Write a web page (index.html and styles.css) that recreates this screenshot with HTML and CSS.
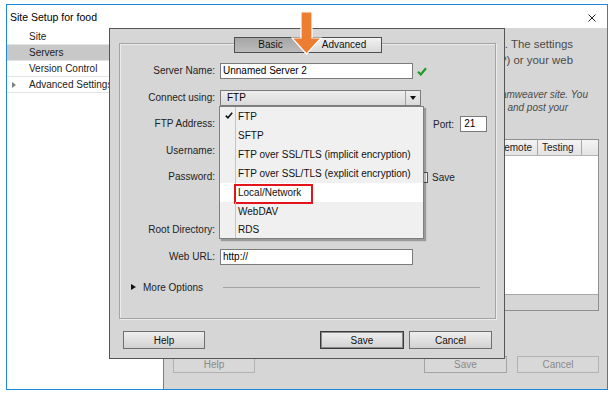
FILE: index.html
```html
<!DOCTYPE html>
<html lang="en">
<head>
<meta charset="utf-8">
<title>Site Setup for food</title>
<link rel="stylesheet" href="styles.css">
</head>
<body>
<div class="window">
  <div class="titlebar">
    <span class="title">Site Setup for food</span>
    <svg class="close" width="8" height="8" viewBox="0 0 8 8"><path d="M0.5 0.5 L7.5 7.5 M7.5 0.5 L0.5 7.5" stroke="#222" stroke-width="1" fill="none"/></svg>
  </div>
  <div class="content">
    <nav class="sidebar">
      <div class="nav-item">Site</div>
      <div class="nav-item selected">Servers</div>
      <div class="nav-item">Version Control</div>
      <div class="nav-item group"><span class="nav-tri"></span>Advanced Settings</div>
    </nav>
    <main class="panel">
      <div class="desc">
        <div class="line r1">Here you'll select the server that will host your pages on the web. The settings</div>
        <div class="line r1">for this dialog box come from your Internet Service Provider (ISP) or your web</div>
        <div class="line">administrator.</div>
      </div>
      <div class="note">
        <div class="line r2">Note: You do not need to complete this step to begin working on your Dreamweaver site. You</div>
        <div class="line r3">only need to define a remote server when you want to connect to the web and post your</div>
        <div class="line">pages.</div>
      </div>
      <div class="server-table">
        <div class="thead">
          <div class="th c-name">Name</div>
          <div class="th c-addr">Address</div>
          <div class="th c-conn">Connection</div>
          <div class="th c-remote">Remote</div>
          <div class="th c-test">Testing</div>
          <div class="th c-fill"></div>
        </div>
        <div class="tbody"></div>
        <div class="ttools"></div>
      </div>
      <div class="bg-buttons">
        <button class="btn-dis w-help">Help</button>
        <span class="spacer"></span>
        <button class="btn-dis w-save">Save</button>
        <button class="btn-dis w-cancel">Cancel</button>
      </div>
    </main>
  </div>

  <div class="dialog">
    <div class="groupbox">
      <div class="tabs-row">
        <div class="tabs">
          <div class="tab active">Basic</div>
          <div class="tab">Advanced</div>
        </div>
      </div>
      <div class="form">
        <label class="lbl">Server Name:</label>
        <div class="ctl">
          <div class="field w-std">Unnamed Server 2</div>
          <svg class="ok" width="10" height="9" viewBox="0 0 10 9"><path d="M1 4.8 L3.8 7.5 L9 1.2" stroke="#1f9b2a" stroke-width="2.2" fill="none"/></svg>
        </div>

        <label class="lbl">Connect using:</label>
        <div class="ctl">
          <div class="select-wrap">
            <div class="select">
              <span class="select-value">FTP</span>
              <span class="select-btn"><span class="down-tri"></span></span>
            </div>
            <div class="menu">
              <div class="menu-item"><span class="chk"><svg width="8" height="7" viewBox="0 0 8 7"><path d="M0.8 3.6 L2.9 5.8 L7.2 0.8" stroke="#111" stroke-width="1.6" fill="none"/></svg></span><span class="mtext">FTP</span></div>
              <div class="menu-item"><span class="chk"></span><span class="mtext">SFTP</span></div>
              <div class="menu-item"><span class="chk"></span><span class="mtext">FTP over SSL/TLS (implicit encryption)</span></div>
              <div class="menu-item"><span class="chk"></span><span class="mtext">FTP over SSL/TLS (explicit encryption)</span></div>
              <div class="menu-item hover"><span class="chk"></span><span class="mtext">Local/Network</span><span class="mark"></span></div>
              <div class="menu-item"><span class="chk"></span><span class="mtext">WebDAV</span></div>
              <div class="menu-item last"><span class="chk"></span><span class="mtext">RDS</span></div>
            </div>
          </div>
        </div>

        <label class="lbl">FTP Address:</label>
        <div class="ctl">
          <div class="field w-wide"></div>
          <span class="port-lbl">Port:</span>
          <div class="field w-port">21</div>
        </div>

        <label class="lbl">Username:</label>
        <div class="ctl"><div class="field w-std"></div></div>

        <label class="lbl">Password:</label>
        <div class="ctl">
          <div class="field w-std"></div>
          <span class="checkbox"></span>
          <span class="save-lbl">Save</span>
        </div>

        <span class="lbl"></span>
        <div class="ctl"><button class="btn w-test">Test</button></div>

        <label class="lbl">Root Directory:</label>
        <div class="ctl"><div class="field w-std"></div></div>

        <label class="lbl">Web URL:</label>
        <div class="ctl"><div class="field w-std">http://</div></div>
      </div>
      <div class="more">
        <span class="more-tri"></span>
        <span class="more-text">More Options</span>
        <span class="more-line"></span>
      </div>
    </div>
    <div class="dlg-buttons">
      <button class="btn w-help2">Help</button>
      <span class="spacer"></span>
      <button class="btn default w-save2">Save</button>
      <button class="btn w-cancel2">Cancel</button>
    </div>
  </div>
</div>

<svg class="arrow" width="32" height="47" viewBox="0 0 32 47">
  <path d="M10 2 H21 V28 H30 L15.5 44 L1 28 H10 Z" fill="#ed7d31" stroke="#ffffff" stroke-width="1.2" stroke-linejoin="miter"/>
</svg>
</body>
</html>
```

FILE: styles.css
```css
* { box-sizing: border-box; }
html, body { margin: 0; padding: 0; }
body {
  width: 616px;
  height: 394px;
  overflow: hidden;
  position: relative;
  background: #ffffff;
  font-family: "Liberation Sans", Arial, sans-serif;
  font-size: 10px;
  color: #1a1a1a;
}
button { font-family: inherit; font-size: 10px; margin: 0; padding: 0; }

.window {
  position: relative;
  margin: 4px 0 0 6px;
  width: 602px;
  height: 386px;
  border: 1px solid #1e88d8;
  background: #ffffff;
  display: flex;
  flex-direction: column;
}
.titlebar {
  height: 23px;
  flex: none;
  display: flex;
  align-items: center;
  justify-content: space-between;
  padding: 0 11px 0 3px;
}
.title { font-size: 10.5px; color: #000; }
.close { display: block; margin-top: 3px; }

.content { flex: 1; display: flex; min-height: 0; }

.sidebar { width: 156px; flex: none; background: #fff; padding-top: 1px; }
.nav-item {
  height: 16px;
  line-height: 15px;
  border-bottom: 1px solid #e3e3e3;
  padding-left: 22px;
  color: #222;
}
.nav-item.selected { background: #c8c8c8; }
.nav-item.group { display: flex; align-items: center; padding-left: 5px; }
.nav-tri {
  width: 0; height: 0;
  border-left: 4px solid #808080;
  border-top: 3px solid transparent;
  border-bottom: 3px solid transparent;
  margin-right: 13px;
}

.panel {
  flex: 1;
  background: #d6d6d6;
  border-left: 1px solid #7d7d7d;
  padding: 8px 8px 0 9px;
  display: flex;
  flex-direction: column;
  min-width: 0;
  overflow: hidden;
}
.desc { font-size: 11.4px; line-height: 16px; color: #4a4a4a; }
.note { font-size: 10px; line-height: 13px; color: #4a4a4a; font-style: italic; margin-top: 4px; }
.line { white-space: nowrap; }
.r1 { text-align: right; padding-right: 26px; }
.r2 { text-align: right; padding-right: 11px; }
.r3 { text-align: right; padding-right: 31px; }

.server-table {
  margin-top: 12px;
  height: 172px;
  border: 1px solid #8f8f8f;
  display: flex;
  flex-direction: column;
}
.thead {
  height: 16px;
  display: flex;
  background: linear-gradient(#f4f4f4, #e3e3e3);
  border-bottom: 1px solid #b4b4b4;
  flex: none;
}
.th {
  border-right: 1px solid #a8a8a8;
  padding-left: 4px;
  line-height: 15px;
  color: #222;
  white-space: nowrap;
}
.c-name { width: 120px; }
.c-addr { width: 110px; }
.c-conn { width: 89px; }
.c-remote { width: 45px; }
.c-test { width: 44px; }
.c-fill { flex: 1; border-right: none; }
.tbody { flex: 1; background: #fff; }
.ttools { height: 16px; flex: none; border-top: 1px solid #a8a8a8; background: #d6d6d6; }

.bg-buttons { display: flex; margin-top: 45px; }
.spacer { flex: 1; }
.btn-dis {
  height: 17px;
  border: 1px solid #b2b2b2;
  background: #d8d8d8;
  color: #8a8a8a;
}
.bg-buttons .w-help { width: 82px; }
.bg-buttons .w-save { width: 83px; border-color: #a4a4a4; }
.bg-buttons .w-cancel { width: 82px; margin-left: 10px; }

/* Modal dialog over the window */
.dialog {
  position: absolute;
  left: 102px;
  top: 23px;
  width: 396px;
  height: 331px;
  background: #d6d6d6;
  border: 1px solid #555;
  display: flex;
  flex-direction: column;
  z-index: 2;
}
.groupbox {
  margin: 14px 0 0 9px;
  width: 377px;
  height: 276px;
  border: 1px solid #a4a4a4;
  box-shadow: inset 1px 1px 0 #ececec, 1px 1px 0 #ececec;
  flex: none;
}
.tabs-row { display: flex; justify-content: center; margin-top: -7px; }
.tabs {
  display: flex;
  border: 1px solid #4f4f4f;
  height: 16px;
}
.tab {
  width: 73px;
  text-align: center;
  line-height: 14px;
  background: linear-gradient(#f2f2f2, #d9d9d9);
  color: #111;
}
.tab.active { background: linear-gradient(#a6a6a6, #bcbcbc); border-right: 1px solid #6a6a6a; }

.form {
  display: grid;
  grid-template-columns: 95px 1fr;
  column-gap: 5px;
  grid-auto-rows: 16px;
  row-gap: 10.5px;
  margin-top: 10px;
}
.lbl { text-align: right; line-height: 16px; color: #222; white-space: nowrap; }
.ctl { display: flex; align-items: center; }
.field {
  height: 16px;
  border: 1px solid #7b7b7b;
  background: #fff;
  padding: 0 2px;
  line-height: 14px;
  color: #000;
  white-space: nowrap;
}
.w-std { width: 193px; }
.w-wide { width: 201px; }
.w-port { width: 27px; margin-left: 6px; padding-left: 3px; }
.port-lbl { margin-left: 12px; color: #222; }
.ok { margin-left: 4px; }
.checkbox { width: 11px; height: 11px; border: 1px solid #555; background: #fff; margin-left: 4px; }
.save-lbl { margin-left: 4px; color: #222; }

.select-wrap { position: relative; width: 201px; }
.select {
  height: 16px;
  width: 201px;
  border: 1px solid #7b7b7b;
  background: linear-gradient(#eeeeee, #dadada);
  display: flex;
}
.select-value { flex: 1; padding-left: 6px; line-height: 14px; color: #000; }
.select-btn {
  width: 15px;
  border-left: 1px solid #a0a0a0;
  display: flex;
  align-items: center;
  justify-content: center;
}
.down-tri {
  width: 0; height: 0;
  border-top: 4px solid #111;
  border-left: 3.5px solid transparent;
  border-right: 3.5px solid transparent;
}

.menu {
  position: absolute;
  left: -1px;
  top: 16px;
  width: 205px;
  background: #f0f0f0;
  border: 1px solid #7f7f7f;
  box-shadow: 2px 2px 1px rgba(0, 0, 0, 0.28);
  z-index: 5;
}
.menu-item { position: relative; display: flex; height: 19px; }
.menu-item.last { height: 17px; }
.menu-item.hover { background: #ffffff; }
.chk {
  width: 16px;
  flex: none;
  border-right: 1px solid #c4c4c4;
  display: flex;
  align-items: center;
  justify-content: center;
}
.chk svg { margin-top: -1px; margin-left: 2px; }
.mtext { padding-left: 2px; line-height: 19px; color: #111; white-space: nowrap; }
.last .mtext { line-height: 18px; }
.mark {
  position: absolute;
  left: 14px;
  top: 1px;
  width: 79px;
  height: 20px;
  border: 2px solid #e3141c;
}

.btn {
  height: 18px;
  border: 1px solid #6f6f6f;
  background: linear-gradient(#eeeeee, #d2d2d2);
  color: #111;
}
.btn.default { border: 1px solid #3a3a3a; box-shadow: inset 0 0 0 1px #8a8a8a; }
.w-test { width: 60px; }

.more {
  display: flex;
  align-items: center;
  height: 14px;
  margin: 15.5px 15px 0 11px;
}
.more-tri {
  width: 0; height: 0;
  border-left: 5px solid #111;
  border-top: 3.5px solid transparent;
  border-bottom: 3.5px solid transparent;
}
.more-text { margin-left: 7px; color: #222; }
.more-line { flex: 1; height: 1px; background: #a2a2a2; margin-left: 20px; }

.dlg-buttons { display: flex; margin-top: 12px; padding: 0 12px 0 13px; }
.w-help2 { width: 82px; }
.w-save2 { width: 84px; }
.w-cancel2 { width: 83px; margin-left: 5px; }

.arrow { position: absolute; left: 291px; top: 10px; z-index: 10; }
```
